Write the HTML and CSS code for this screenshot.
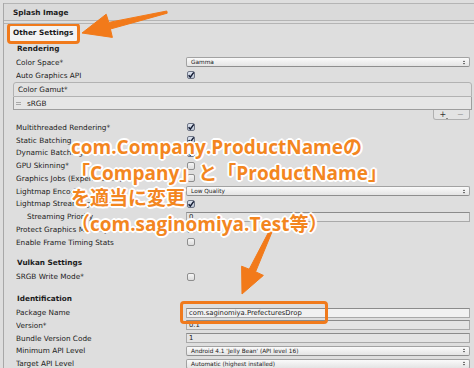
FILE: index.html
```html
<!DOCTYPE html>
<html>
<head>
<meta charset="utf-8">
<link rel="stylesheet" href="styles.css">
</head>
<body>
<div class="mark mark-title"></div>
<div class="inspector">
  <div class="section-head">Splash Image</div>
  <div class="section">
    <div class="section-title">Other Settings</div>
    <div class="group-title">Rendering</div>
    <div class="row"><span class="label">Color Space*</span><div class="value"><div class="dropdown"><span>Gamma</span><svg class="updown" viewBox="0 0 3 6"><path d="M1.5 0L3 2.4H0Z M1.5 6L3 3.6H0Z"/></svg></div></div></div>
    <div class="row"><span class="label">Auto Graphics API</span><div class="value"><span class="check on"><svg viewBox="0 0 8 8"><path d="M1.6 4.2L3.3 6.1L6.8 1.4"/></svg></span></div></div>
    <div class="list">
      <div class="list-head">Color Gamut*</div>
      <div class="list-body"><span class="handle"></span><span>sRGB</span></div>
      <div class="list-foot"><span class="plus">+<i></i></span><span class="minus">−</span></div>
    </div>
    <div class="row first"><span class="label">Multithreaded Rendering*</span><div class="value"><span class="check on"><svg viewBox="0 0 8 8"><path d="M1.6 4.2L3.3 6.1L6.8 1.4"/></svg></span></div></div>
    <div class="row"><span class="label">Static Batching</span><div class="value"><span class="check on"><svg viewBox="0 0 8 8"><path d="M1.6 4.2L3.3 6.1L6.8 1.4"/></svg></span></div></div>
    <div class="row"><span class="label">Dynamic Batching</span><div class="value"><span class="check on"><svg viewBox="0 0 8 8"><path d="M1.6 4.2L3.3 6.1L6.8 1.4"/></svg></span></div></div>
    <div class="row"><span class="label">GPU Skinning*</span><div class="value"><span class="check"></span></div></div>
    <div class="row"><span class="label">Graphics Jobs (Experimental)*</span><div class="value"><span class="check"></span></div></div>
    <div class="row"><span class="label">Lightmap Encoding</span><div class="value"><div class="dropdown"><span>Low Quality</span><svg class="updown" viewBox="0 0 3 6"><path d="M1.5 0L3 2.4H0Z M1.5 6L3 3.6H0Z"/></svg></div></div></div>
    <div class="row"><span class="label">Lightmap Streaming Enabled</span><div class="value"><span class="check on"><svg viewBox="0 0 8 8"><path d="M1.6 4.2L3.3 6.1L6.8 1.4"/></svg></span></div></div>
    <div class="row"><span class="label indent">Streaming Priority</span><div class="value"><div class="field">0</div></div></div>
    <div class="row"><span class="label">Protect Graphics Memory</span><div class="value"><span class="check"></span></div></div>
    <div class="row"><span class="label">Enable Frame Timing Stats</span><div class="value"><span class="check"></span></div></div>
    <div class="group-title gap">Vulkan Settings</div>
    <div class="row"><span class="label">SRGB Write Mode*</span><div class="value"><span class="check"></span></div></div>
    <div class="group-title gap2">Identification</div>
    <div class="row"><span class="label">Package Name</span><div class="value"><div class="field light">com.saginomiya.PrefecturesDrop</div></div></div>
    <div class="row"><span class="label">Version*</span><div class="value"><div class="field">0.1</div></div></div>
    <div class="row"><span class="label">Bundle Version Code</span><div class="value"><div class="field">1</div></div></div>
    <div class="row"><span class="label">Minimum API Level</span><div class="value"><div class="dropdown"><span>Android 4.1 'Jelly Bean' (API level 16)</span><svg class="updown" viewBox="0 0 3 6"><path d="M1.5 0L3 2.4H0Z M1.5 6L3 3.6H0Z"/></svg></div></div></div>
    <div class="row"><span class="label">Target API Level</span><div class="value"><div class="dropdown"><span>Automatic (highest installed)</span><svg class="updown" viewBox="0 0 3 6"><path d="M1.5 0L3 2.4H0Z M1.5 6L3 3.6H0Z"/></svg></div></div></div>
  </div>
</div>

<div class="mark mark-package"></div>

<svg class="arrows" width="474" height="368" viewBox="0 0 474 368">
  <path d="M167.2 13.2 L110.4 29.0 L112.4 37.4 L82 33 L106.2 14.2 L108.8 22.4 L166.8 11.0 Z"/>
  <path d="M274.2 226.6 L255.6 271.8 L263.4 275.4 L242 294 L241.6 266.2 L249.2 269.2 L272.0 225.6 Z"/>
</svg>

<div class="note">
  <div class="note-line">com.Company.ProductNameの</div>
  <div class="note-line">「Company」と「ProductName」</div>
  <div class="note-line">を適当に変更</div>
  <div class="note-line">（com.saginomiya.Test等）</div>
</div>
</body>
</html>
```

FILE: styles.css
```css
html, body {
  margin: 0;
  padding: 0;
}
body {
  width: 474px;
  height: 368px;
  overflow: hidden;
  position: relative;
  background: #dedede;
  font-family: "DejaVu Sans", "Liberation Sans", sans-serif;
  font-size: 7.3px;
  color: #1c1c1c;
}
.inspector {
  margin: 3px 0 0 3px;
  height: 365px;
  border-left: 1px solid #a8a8a8;
}
.section-head {
  height: 16px;
  border-top: 1px solid #b4b4b4;
  border-bottom: 1px solid #b4b4b4;
  display: flex;
  align-items: center;
  padding-left: 9px;
  font-weight: bold;
  background: #dadada;
}
.section {
  margin-top: 2px;
  border-top: 1px solid #b4b4b4;
}
.section-title {
  height: 16px;
  display: flex;
  align-items: center;
  padding-left: 9px;
  font-weight: bold;
}
.group-title {
  height: 16px;
  display: flex;
  align-items: center;
  padding-left: 13px;
  font-weight: bold;
}
.group-title.gap { margin-top: 6px; }
.group-title.gap2 { margin-top: 7px; }
.row {
  height: 12.75px;
  display: flex;
  align-items: center;
  padding-left: 12px;
}
.row.first { margin-top: 1px; }
.label {
  width: 170px;
  flex: 0 0 170px;
  white-space: nowrap;
  overflow: hidden;
}
.label.indent { padding-left: 11px; box-sizing: border-box; }
.value {
  flex: 0 0 284px;
  display: flex;
  align-items: center;
}
.dropdown {
  flex: 1;
  height: 10px;
  box-sizing: border-box;
  border: 1px solid #a2a2a2;
  border-bottom-color: #8e8e8e;
  border-radius: 2px;
  background: linear-gradient(#fafafa, #e4e4e4);
  display: flex;
  align-items: center;
  justify-content: space-between;
  padding: 0 4px 0 4px;
  font-size: 5.8px;
  color: #222;
}
.updown {
  width: 2px;
  height: 5px;
  fill: #333;
}
.field {
  flex: 1;
  height: 10px;
  box-sizing: border-box;
  border: 1px solid #a9a9a9;
  border-top-color: #8b8b8b;
  background: #e4e4e4;
  display: flex;
  align-items: center;
  padding-left: 2px;
  font-size: 6.8px;
  color: #222;
}
.field.light { background: #f1f1f1; }
.check {
  width: 8px;
  height: 8px;
  box-sizing: border-box;
  margin-left: 1px;
  border: 1px solid #8e8e8e;
  border-radius: 2px;
  background: linear-gradient(#f6f6f6, #dcdcdc);
  display: flex;
}
.check.on {
  background: linear-gradient(#dde3ee, #bcc6d6);
  border-color: #6f7686;
}
.check svg {
  width: 8px;
  height: 8px;
  margin: -1px;
  fill: none;
  stroke: #141c33;
  stroke-width: 1.5;
}
.list {
  margin: 0.5px 2px 0 9px;
  display: flex;
  flex-direction: column;
}
.list-head {
  height: 13px;
  border: 1px solid #b2b2b2;
  border-radius: 3px 3px 0 0;
  background: #e1e1e1;
  display: flex;
  align-items: center;
  padding-left: 4px;
}
.list-body {
  height: 12px;
  border: 1px solid #9e9e9e;
  border-top: none;
  background: #e6e6e6;
  display: flex;
  align-items: center;
  padding-left: 2px;
  gap: 6px;
}
.handle {
  width: 5px;
  height: 3px;
  border-top: 1px solid #a8a8a8;
  border-bottom: 1px solid #a8a8a8;
  box-sizing: border-box;
}
.list-foot {
  align-self: flex-end;
  margin-right: 2px;
  width: 37px;
  height: 10px;
  box-sizing: border-box;
  border: 1px solid #b0b0b0;
  border-top: none;
  border-radius: 0 0 3px 3px;
  background: #e3e3e3;
  display: flex;
  align-items: center;
  justify-content: space-around;
  font-size: 8px;
  line-height: 8px;
}
.plus { position: relative; color: #333; }
.plus i {
  position: absolute;
  right: -2px;
  bottom: 0;
  width: 0;
  height: 0;
  border-left: 1px solid transparent;
  border-right: 1px solid transparent;
  border-top: 1.5px solid #333;
}
.minus { color: #9a9a9a; }

.mark {
  position: absolute;
  border: 3px solid #f07a1c;
  border-radius: 4px;
  box-sizing: border-box;
}
.mark-title {
  left: 7px;
  top: 23px;
  width: 73px;
  height: 21px;
  background: #f3f3f3;
  z-index: -1;
}
.mark-package {
  left: 180px;
  top: 301px;
  width: 148px;
  height: 23px;
}
.arrows {
  position: absolute;
  left: 0;
  top: 0;
}
.arrows path {
  fill: #f27a1a;
  stroke: #f27a1a;
  stroke-width: 1;
  stroke-linejoin: round;
}
.note {
  position: absolute;
  left: 71px;
  top: 135px;
  font-family: "Open Sans", "Noto Sans CJK JP", sans-serif;
  font-weight: 700;
  font-size: 19px;
  line-height: 25.5px;
  color: #f3861f;
  white-space: nowrap;
  text-shadow:
    2px 0 0 #fff, -2px 0 0 #fff, 0 2px 0 #fff, 0 -2px 0 #fff,
    1.4px 1.4px 0 #fff, -1.4px 1.4px 0 #fff, 1.4px -1.4px 0 #fff, -1.4px -1.4px 0 #fff;
}
.note-line { height: 25.5px; }
```
